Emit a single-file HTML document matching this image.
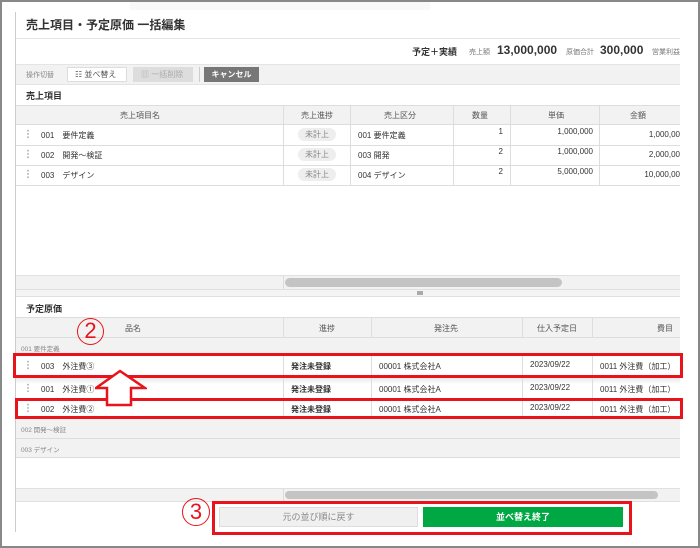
<!DOCTYPE html>
<html><head><meta charset="utf-8"><style>
*{margin:0;padding:0;box-sizing:border-box}
body{width:700px;height:548px;overflow:hidden;background:#fff;font-family:"Liberation Sans","Noto Sans CJK JP",sans-serif;color:#333;position:relative}
.a{position:absolute}
.t{font-size:8px;white-space:nowrap}
.hl{position:absolute;height:1px;background:#ddd}
.vl{position:absolute;width:1px;background:#ddd}
.dots{position:absolute;width:2px;height:10px;background:radial-gradient(circle,#bbb 0.9px,transparent 1px) 0 0/2px 3.3px}
.pill{position:absolute;width:38px;height:13px;border-radius:7px;background:#eee;color:#888;font-size:8px;text-align:center;line-height:13px}
.r{text-align:right}
</style></head><body>
<div class="a" style="left:0;top:0;width:700px;height:548px;border:2px solid #888;border-bottom-width:2px"></div>
<div class="a" style="left:15px;top:12px;width:666px;height:520px;border-left:1px solid #ccc;background:#fff"></div>
<div class="a" style="left:130px;top:2px;width:300px;height:8px;background:#f8f8f8"></div>
<!-- title -->
<div class="a" style="left:26px;top:16px;font-size:12px;font-weight:bold;color:#333">売上項目・予定原価 一括編集</div>
<div class="hl" style="left:16px;top:38px;width:664px;background:#e4e4e4"></div>
<div class="a t" style="left:412px;top:45px;font-size:9px;font-weight:bold">予定＋実績</div>
<div class="a t" style="left:469px;top:47px;font-size:7px;color:#777">売上額</div>
<div class="a t" style="left:497px;top:43px;font-size:12px;font-weight:bold">13,000,000</div>
<div class="a t" style="left:566px;top:47px;font-size:7px;color:#777">原価合計</div>
<div class="a t" style="left:600px;top:43px;font-size:12px;font-weight:bold">300,000</div>
<div class="a t" style="left:652px;top:47px;font-size:7px;color:#777">営業利益</div>
<div class="a" style="left:680px;top:12px;width:18px;height:522px;background:#fff"></div>
<!-- toolbar -->
<div class="a" style="left:16px;top:64px;width:664px;height:21px;background:#f2f2f2;border-top:1px solid #e4e4e4;border-bottom:1px solid #e4e4e4"></div>
<div class="a t" style="left:26px;top:70px;font-size:7px;color:#888">操作切替</div>
<div class="a t" style="left:67px;top:67px;width:60px;height:15px;background:#fff;border:1px solid #ddd;font-size:8px;line-height:13px;padding-left:7px;color:#555">☷ 並べ替え</div>
<div class="a t" style="left:133px;top:67px;width:60px;height:15px;background:#ddd;font-size:8px;line-height:15px;padding-left:8px;color:#aaa">▥ 一括削除</div>
<div class="vl" style="left:199px;top:67px;height:15px;background:#ccc"></div>
<div class="a t" style="left:204px;top:67px;width:55px;height:15px;background:#777;color:#fff;font-weight:bold;font-size:8px;line-height:15px;text-align:center">キャンセル</div>
<!-- sales heading -->
<div class="a t" style="left:26px;top:89px;font-size:9px;font-weight:bold">売上項目</div>
<div class="a" style="left:16px;top:105px;width:664px;height:20px;background:#f2f2f2;border-top:1px solid #ddd;border-bottom:1px solid #ddd"></div>
<div class="a t" style="left:120px;top:110px;color:#555">売上項目名</div>
<div class="a t" style="left:301px;top:110px;color:#555">売上進捗</div>
<div class="a t" style="left:384px;top:110px;color:#555">売上区分</div>
<div class="a t" style="left:472px;top:110px;color:#555">数量</div>
<div class="a t" style="left:548px;top:110px;color:#555">単価</div>
<div class="a t" style="left:630px;top:110px;color:#555">金額</div>
<div class="vl" style="left:283px;top:105px;height:80px"></div>
<div class="vl" style="left:350px;top:105px;height:80px"></div>
<div class="vl" style="left:453px;top:105px;height:80px"></div>
<div class="vl" style="left:510px;top:105px;height:80px"></div>
<div class="vl" style="left:599px;top:105px;height:80px"></div>
<div class="hl" style="left:16px;top:145px;width:664px"></div>
<div class="hl" style="left:16px;top:165px;width:664px"></div>
<div class="hl" style="left:16px;top:185px;width:664px"></div>

<div class="dots" style="left:27px;top:129px"></div>
<div class="a t" style="left:41px;top:130px">001　要件定義</div>
<div class="pill" style="left:298px;top:128px">未計上</div>
<div class="a t" style="left:358px;top:130px">001 要件定義</div>
<div class="a t r" style="left:470px;top:127px;width:33px">1</div>
<div class="a t r" style="left:520px;top:127px;width:73px">1,000,000</div>
<div class="a t r" style="left:610px;top:130px;width:70px">1,000,00</div>

<div class="dots" style="left:27px;top:149px"></div>
<div class="a t" style="left:41px;top:150px">002　開発～検証</div>
<div class="pill" style="left:298px;top:148px">未計上</div>
<div class="a t" style="left:358px;top:150px">003 開発</div>
<div class="a t r" style="left:470px;top:147px;width:33px">2</div>
<div class="a t r" style="left:520px;top:147px;width:73px">1,000,000</div>
<div class="a t r" style="left:610px;top:150px;width:70px">2,000,00</div>

<div class="dots" style="left:27px;top:169px"></div>
<div class="a t" style="left:41px;top:170px">003　デザイン</div>
<div class="pill" style="left:298px;top:168px">未計上</div>
<div class="a t" style="left:358px;top:170px">004 デザイン</div>
<div class="a t r" style="left:470px;top:167px;width:33px">2</div>
<div class="a t r" style="left:520px;top:167px;width:73px">5,000,000</div>
<div class="a t r" style="left:610px;top:170px;width:70px">10,000,00</div>

<!-- scrollbar 1 -->
<div class="a" style="left:16px;top:275px;width:664px;height:15px;background:#f2f2f2;border-top:1px solid #e0e0e0;border-bottom:1px solid #e0e0e0"></div>
<div class="vl" style="left:283px;top:275px;height:15px"></div>
<div class="a" style="left:285px;top:278px;width:277px;height:9px;border-radius:5px;background:#c4c4c4"></div>
<div class="a" style="left:16px;top:290px;width:664px;height:7px;background:#f4f4f4;border-bottom:1px solid #e0e0e0"></div>
<div class="a" style="left:417px;top:291px;width:6px;height:4px;background:#aaa"></div>

<!-- cost -->
<div class="a t" style="left:26px;top:302px;font-size:9px;font-weight:bold">予定原価</div>
<div class="a" style="left:16px;top:317px;width:664px;height:21px;background:#f2f2f2;border-top:1px solid #ddd;border-bottom:1px solid #ddd"></div>
<div class="a t" style="left:125px;top:323px;color:#555">品名</div>
<div class="a t" style="left:319px;top:323px;color:#555">進捗</div>
<div class="a t" style="left:434px;top:323px;color:#555">発注先</div>
<div class="a t" style="left:537px;top:323px;color:#555">仕入予定日</div>
<div class="a t" style="left:657px;top:323px;color:#555">費目</div>
<div class="vl" style="left:283px;top:317px;height:21px"></div>
<div class="vl" style="left:371px;top:317px;height:21px"></div>
<div class="vl" style="left:522px;top:317px;height:21px"></div>
<div class="vl" style="left:592px;top:317px;height:21px"></div>
<div class="a" style="left:16px;top:338px;width:664px;height:16px;background:#f2f2f2"></div>
<div class="a t" style="left:21px;top:343px;font-size:6.5px;color:#888">001 要件定義</div>
<div class="a" style="left:16px;top:378px;width:664px;height:6px;background:linear-gradient(#e8e8e8,#fff)"></div>
<div class="vl" style="left:283px;top:354px;height:64px"></div>
<div class="vl" style="left:371px;top:354px;height:64px"></div>
<div class="vl" style="left:522px;top:354px;height:64px"></div>
<div class="vl" style="left:592px;top:354px;height:64px"></div>
<div class="hl" style="left:16px;top:398px;width:664px"></div>

<div class="dots" style="left:27px;top:360px"></div>
<div class="a t" style="left:41px;top:361px">003　外注費③</div>
<div class="a t" style="left:291px;top:361px;font-weight:bold">発注未登録</div>
<div class="a t" style="left:379px;top:361px">00001  株式会社A</div>
<div class="a t" style="left:530px;top:360px">2023/09/22</div>
<div class="a t" style="left:600px;top:361px">0011  外注費（加工）</div>

<div class="dots" style="left:27px;top:383px"></div>
<div class="a t" style="left:41px;top:384px">001　外注費①</div>
<div class="a t" style="left:291px;top:384px;font-weight:bold">発注未登録</div>
<div class="a t" style="left:379px;top:384px">00001  株式会社A</div>
<div class="a t" style="left:530px;top:383px">2023/09/22</div>
<div class="a t" style="left:600px;top:384px">0011  外注費（加工）</div>

<div class="dots" style="left:27px;top:403px"></div>
<div class="a t" style="left:41px;top:404px">002　外注費②</div>
<div class="a t" style="left:291px;top:404px;font-weight:bold">発注未登録</div>
<div class="a t" style="left:379px;top:404px">00001  株式会社A</div>
<div class="a t" style="left:530px;top:403px">2023/09/22</div>
<div class="a t" style="left:600px;top:404px">0011  外注費（加工）</div>

<div class="a" style="left:16px;top:418px;width:664px;height:40px;background:#f2f2f2;border-bottom:1px solid #ddd"></div>
<div class="hl" style="left:16px;top:438px;width:664px"></div>
<div class="a t" style="left:21px;top:424px;font-size:6.5px;color:#888">002 開発～検証</div>
<div class="a t" style="left:21px;top:444px;font-size:6.5px;color:#888">003 デザイン</div>

<!-- scrollbar 2 -->
<div class="a" style="left:16px;top:488px;width:664px;height:14px;background:#f2f2f2;border-top:1px solid #e0e0e0;border-bottom:1px solid #e0e0e0"></div>
<div class="vl" style="left:283px;top:488px;height:14px"></div>
<div class="a" style="left:285px;top:491px;width:373px;height:8px;border-radius:4px;background:#c4c4c4"></div>

<!-- buttons -->
<div class="a t" style="left:219px;top:507px;width:199px;height:20px;background:#f0f0f0;border:1px solid #ddd;color:#888;font-size:9px;text-align:center;line-height:18px">元の並び順に戻す</div>
<div class="a t" style="left:423px;top:507px;width:200px;height:20px;background:#00a843;color:#fff;font-weight:bold;font-size:9px;text-align:center;line-height:20px">並べ替え終了</div>

<!-- annotations -->
<div class="a" style="left:13px;top:353px;width:670px;height:25px;border:3px solid #e8141c"></div>
<div class="a" style="left:15px;top:398px;width:668px;height:21px;border:3px solid #e8141c"></div>
<div class="a" style="left:212px;top:501px;width:420px;height:34px;border:3px solid #e8141c"></div>
<div class="a" style="left:77px;top:318px;width:27px;height:27px;border:1.5px solid #e8141c;border-radius:50%;color:#e8141c;font-size:22px;text-align:center;line-height:24px">2</div>
<div class="a" style="left:182px;top:498px;width:28px;height:28px;border:1.5px solid #e8141c;border-radius:50%;color:#e8141c;font-size:22px;text-align:center;line-height:25px">3</div>
<svg class="a" style="left:95px;top:368px" width="52" height="40"><path d="M24 2 L49 19 L35 19 L35 36 L11 36 L11 19 L0 19 Z" transform="translate(1,1)" fill="#fff" stroke="#e8141c" stroke-width="2.5" stroke-linejoin="miter"/></svg>
</body></html>
